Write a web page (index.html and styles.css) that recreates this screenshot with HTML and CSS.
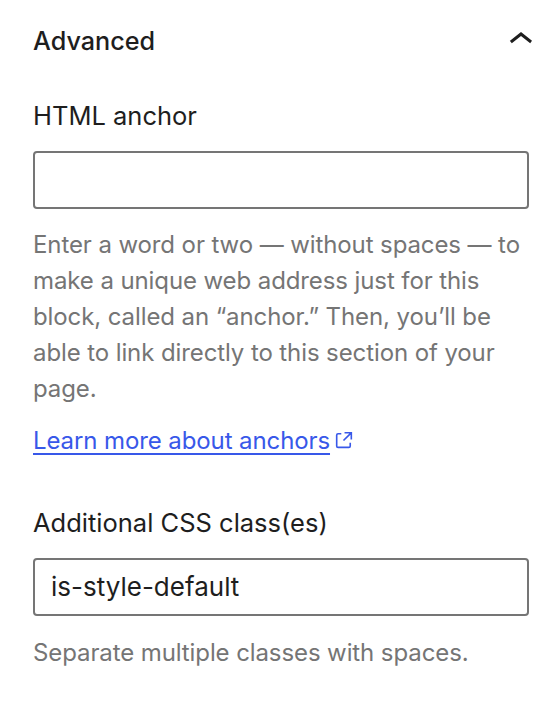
FILE: index.html
```html
<!DOCTYPE html>
<html>
<head>
<meta charset="utf-8">
<link rel="stylesheet" href="styles.css">
</head>
<body>
<div class="panel">
  <div class="panel-header">
    <h2 class="panel-title">Advanced</h2>
    <svg class="chevron" viewBox="0 0 24 24" width="48" height="48"><path d="M6.5 12.4L12 8l5.5 4.4-.9 1.2L12 10l-4.6 3.6-1-1.2z"/></svg>
  </div>
  <div class="field">
    <label class="label">HTML anchor</label>
    <div class="input"></div>
    <p class="help">Enter a word or two — without spaces — to make a unique web address just for this block, called an “anchor.” Then, you’ll be able to link directly to this section of your page.</p>
    <p class="help link-row"><a class="link" href="#">Learn more about anchors</a><svg class="ext" viewBox="0 0 24 24" width="26" height="26"><path d="M19.5 4.5h-7V6h4.44l-5.970 5.97 1.06 1.06L18 7.06v4.44h1.5v-7Zm-13 1a2 2 0 0 0-2 2v10a2 2 0 0 0 2 2h10a2 2 0 0 0 2-2v-3H17v3a.5.5 0 0 1-.5.5h-10a.5.5 0 0 1-.5-.5v-10a.5.5 0 0 1 .5-.5h3V5.5h-3Z"/></svg></p>
  </div>
  <div class="field second">
    <label class="label">Additional CSS class(es)</label>
    <div class="input filled">is-style-default</div>
    <p class="help">Separate multiple classes with spaces.</p>
  </div>
</div>
</body>
</html>
```
FILE: styles.css
```css
* { box-sizing: border-box; }
html, body { margin: 0; padding: 0; background: #fff; }
body {
  font-family: Inter, "Noto Sans", sans-serif;
  color: #1e1e1e;
}
.panel {
  padding: 0 31px 0 33px;
  width: 560px;
}
.panel-header {
  height: 82px;
  display: flex;
  align-items: center;
  justify-content: space-between;
}
.panel-title {
  margin: 0;
  font-size: 25.2px;
  font-weight: 500;
  line-height: 36px;
}
.chevron {
  margin-right: -16px;
  margin-top: -2px;
  fill: #1e1e1e;
}
.field { padding-top: 16px; }
.field.second { padding-top: 46px; }
.label {
  display: block;
  font-size: 25.5px;
  line-height: 36px;
  margin-bottom: 17px;
}
.input {
  width: 496px;
  height: 58px;
  border: 2px solid #757575;
  border-radius: 4px;
  font-size: 26px;
  line-height: 54px;
  padding: 0 16px;
  color: #1e1e1e;
}
.help {
  margin: 18px 0 0;
  font-size: 24px;
  line-height: 36px;
  letter-spacing: -0.1px;
  color: #757575;
}
.link-row {
  margin-top: 16px;
  display: flex;
  align-items: center;
}
.link {
  color: #3858e9;
  text-decoration: underline;
  text-decoration-thickness: 2px;
  text-underline-offset: 4px;
}
.ext {
  fill: #3858e9;
  margin-left: 1px;
  margin-top: -2px;
}
.second .help { margin-top: 19px; }
```
